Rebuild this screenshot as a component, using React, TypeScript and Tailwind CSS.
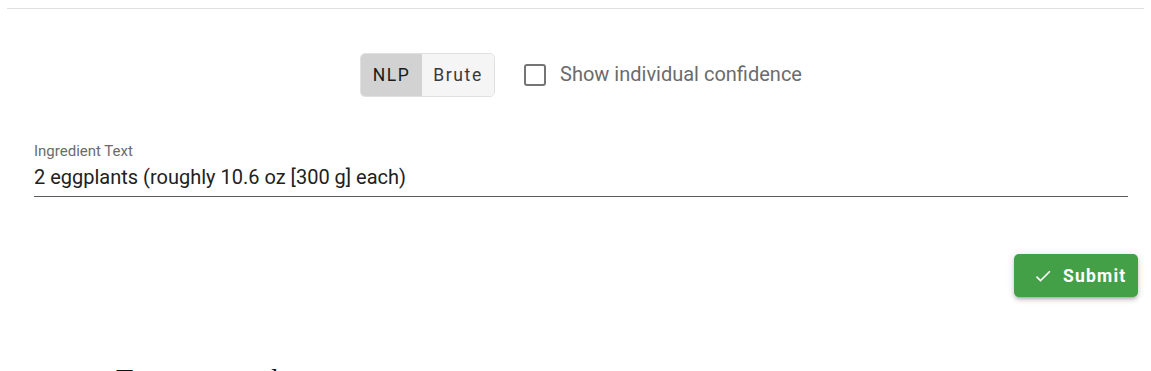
import React from "react";

const CheckIcon = () => (
  <svg viewBox="0 0 24 24" className="w-[20px] h-[20px] fill-white">
    <path d="M21,7L9,19L3.5,13.5L4.91,12.09L9,16.17L19.59,5.59L21,7Z" />
  </svg>
);

export default function App() {
  return (
    <div className="w-[1151px] h-[371px] overflow-hidden bg-white font-['Roboto',sans-serif]">
      {/* divider from the card above */}
      <div className="mx-[7px] mt-[8px] h-px bg-[#e0e0e0]" />

      <div className="ml-[34px] w-[1094px]">
        {/* mode toggle + confidence checkbox */}
        <div className="mt-[44px] flex items-center justify-center gap-[29px]">
          <div className="flex h-[44px] rounded-[5px] border border-[#e0e0e0] overflow-hidden">
            <button className="w-[61px] h-full bg-[#d2d2d2] text-[17.5px] font-normal tracking-[1.6px] text-[#1a1a1a]">
              NLP
            </button>
            <button className="w-[72px] h-full bg-[#f5f5f5] text-[17.5px] font-normal tracking-[1.6px] text-[#3a3a3a]">
              Brute
            </button>
          </div>
          <label className="flex items-center">
            <span className="w-[22px] h-[22px] rounded-[3px] border-[2.4px] border-[#757575]" />
            <span className="ml-[14px] pb-[3px] text-[20px] text-[#6b6b6b]">Show individual confidence</span>
          </label>
        </div>

        {/* ingredient text field */}
        <div className="mt-[45px]">
          <div className="text-[15px] leading-[18px] text-[#6b6b6b]">Ingredient Text</div>
          <div className="mt-[2px] h-[35px] border-b border-[#5c5c5c] text-[20px] leading-[30px] text-[#212121]">
            2 eggplants (roughly 10.6 oz [300 g] each)
          </div>
        </div>
      </div>

      {/* submit */}
      <div className="mt-[57px] flex justify-end pr-[13px]">
        <button className="flex h-[43px] w-[124px] items-center rounded-[5px] bg-[#43a047] pl-[19px] shadow-[0_3px_3px_-2px_rgba(0,0,0,0.2),0_3px_4px_0_rgba(0,0,0,0.14),0_1px_8px_0_rgba(0,0,0,0.12)]">
          <CheckIcon />
          <span className="ml-[10px] pt-[1px] text-[17.5px] font-bold tracking-[1.2px] text-white">Submit</span>
        </button>
      </div>

      {/* next section heading, cut off at the bottom */}
      <div className="mt-[65px] flex pl-[116px] font-['Liberation_Serif',serif] text-[28px] leading-[33.6px] text-[#111]">
        <span className="w-[155px]">Type</span>
        <span>lemma</span>
      </div>
    </div>
  );
}
